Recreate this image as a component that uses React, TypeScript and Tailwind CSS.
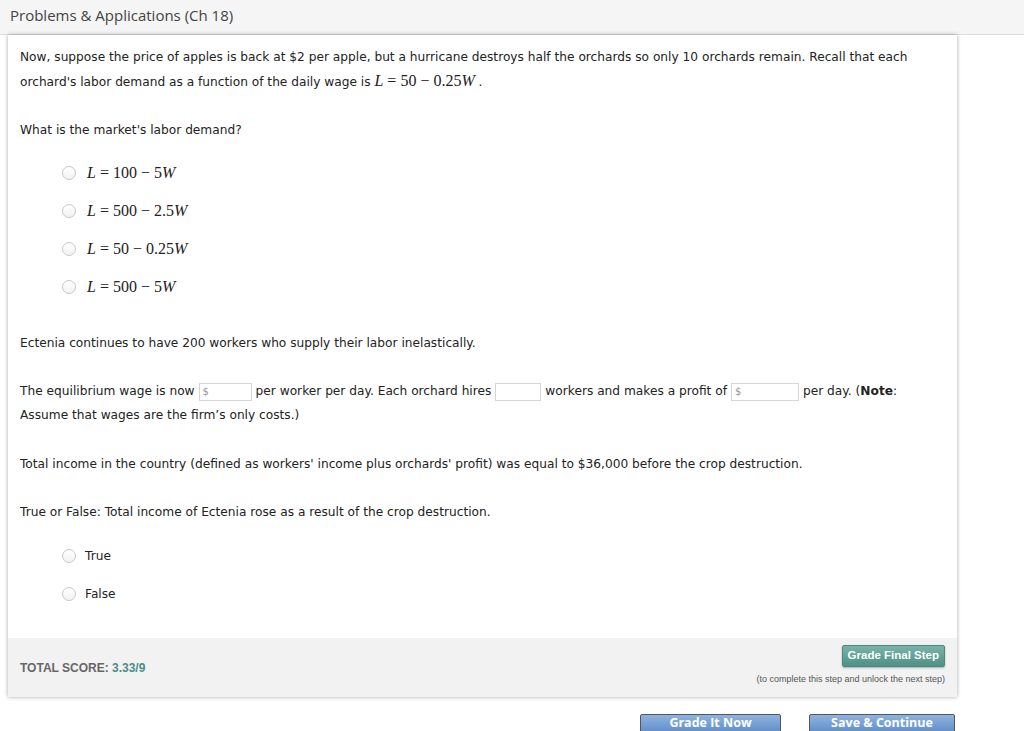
import React from 'react';

const sans = { fontFamily: '"DejaVu Sans", Verdana, sans-serif' };

function Math({ a, b }: { a: string; b: string }) {
    return (
        <span className="font-['Liberation_Serif',serif] text-[16px] text-[#222]">
            <i>L</i>
            <span className="mx-[4px]">=</span>
            {a}
            <span className="mx-[4px]">−</span>
            {b}
            <i>W</i>
        </span>
    );
}

function Radio() {
    return <span className="inline-block w-[14px] h-[14px] rounded-full border border-[#c8c8c8] bg-gradient-to-b from-white to-[#f2f2f2] shrink-0" />;
}

function Input({ w, dollar }: { w: string; dollar?: boolean }) {
    return (
        <span className={`inline-block align-middle h-[18px] leading-[16px] border border-[#d6d6d6] bg-white mx-[4px] px-[3px] text-[10px] text-[#999] ${w}`}>
            {dollar ? '$' : ''}
        </span>
    );
}

export default function App() {
    const options = [
        ['100', '5'],
        ['500', '2.5'],
        ['50', '0.25'],
        ['500', '5'],
    ];

    return (
        <div className="w-[1024px] h-[731px] overflow-hidden bg-white">
            {/* Title bar */}
            <div className="h-[35px] bg-[#f5f5f5] border-b border-[#dedede] flex items-center pl-[10px] pb-[3px]">
                <span className="font-['Open_Sans',sans-serif] text-[15px] text-[#444]">Problems &amp; Applications (Ch 18)</span>
            </div>

            {/* Card */}
            <div className="ml-[8px] w-[949px] bg-white shadow-[0_0_4px_rgba(0,0,0,0.35)]">
                <div className="px-[12px] pt-[10px] text-[12.2px] text-[#222] leading-[24px]" style={sans}>
                    <p>
                        Now, suppose the price of apples is back at $2 per apple, but a hurricane destroys half the orchards so only 10 orchards remain. Recall that each orchard's labor demand as a function of the daily wage is{' '}
                        <Math a="50" b="0.25" /> .
                    </p>

                    <p className="mt-[24px]">What is the market's labor demand?</p>

                    <div className="mt-[12px] pl-[42px]">
                        {options.map(([a, b], i) => (
                            <div key={i} className="h-[38px] flex items-center gap-[11px]">
                                <Radio />
                                <Math a={a} b={b} />
                            </div>
                        ))}
                    </div>

                    <p className="mt-[25px]">Ectenia continues to have 200 workers who supply their labor inelastically.</p>

                    <p className="mt-[24px] pr-[40px]">
                        The equilibrium wage is now<Input w="w-[53px]" dollar />per worker per day. Each orchard hires
                        <Input w="w-[46px]" />workers and makes a profit of<Input w="w-[68px]" dollar />per day. (<b>Note</b>: Assume that wages are the firm’s only costs.)
                    </p>

                    <p className="mt-[25px]">Total income in the country (defined as workers' income plus orchards' profit) was equal to $36,000 before the crop destruction.</p>

                    <p className="mt-[24px]">True or False: Total income of Ectenia rose as a result of the crop destruction.</p>

                    <div className="mt-[13px] pl-[42px] pb-[25px]">
                        {['True', 'False'].map((t) => (
                            <div key={t} className="h-[38px] flex items-center gap-[9px]">
                                <Radio />
                                <span>{t}</span>
                            </div>
                        ))}
                    </div>
                </div>

                {/* Footer */}
                <div className="h-[59px] bg-[#f2f2f2] flex items-center justify-between pl-[12px] pr-[12px] font-['Liberation_Sans',Arial,sans-serif]">
                    <span className="text-[12px] font-bold text-[#666] mt-[1px]">
                        TOTAL SCORE: <span className="text-[#4b8d87]">3.33/9</span>
                    </span>
                    <div className="flex flex-col items-end self-start pt-[7px]">
                        <button className="h-[22px] px-[5px] bg-gradient-to-b from-[#79b3a8] to-[#4e9186] border border-[#4a8a80] rounded-[2px] shadow-[0_1px_2px_rgba(0,0,0,0.3)] text-white text-[11.5px] font-bold">
                            Grade Final Step
                        </button>
                        <span className="mt-[6px] text-[9px] text-[#555]">(to complete this step and unlock the next step)</span>
                    </div>
                </div>
            </div>

            {/* Bottom buttons */}
            <div className="mt-[17px] flex pl-[640px] gap-[28px]">
                <button className="w-[141px] h-[26px] flex items-start justify-center bg-gradient-to-b from-[#8fb3df] to-[#4f80c0] border border-[#555] rounded-t-[2px] text-white text-[12.5px] font-bold font-['Open_Sans',sans-serif] leading-[16px]">
                    Grade It Now
                </button>
                <button className="w-[146px] h-[26px] flex items-start justify-center bg-gradient-to-b from-[#8fb3df] to-[#4f80c0] border border-[#555] rounded-t-[2px] text-white text-[12.5px] font-bold font-['Open_Sans',sans-serif] leading-[16px]">
                    Save &amp; Continue
                </button>
            </div>
        </div>
    );
}
